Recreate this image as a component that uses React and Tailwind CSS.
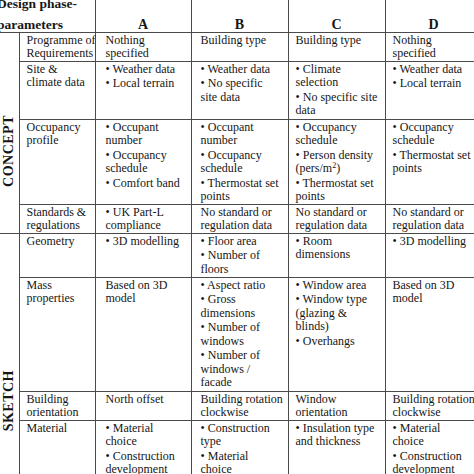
import React from "react";

const B = "• ";

const rowsConcept = [
  {
    h: "h-[28px]",
    p: ["Programme of", "Requirements"],
    c: [["Nothing", "specified"], ["Building type"], ["Building type"], ["Nothing", "specified"]],
  },
  {
    h: "h-[58px]",
    p: ["Site &", "climate data"],
    c: [
      [B + "Weather data", B + "Local terrain"],
      [B + "Weather data", B + "No specific", "site data"],
      [B + "Climate", "selection", B + "No specific site", "data"],
      [B + "Weather data", B + "Local terrain"],
    ],
  },
  {
    h: "h-[85px]",
    p: ["Occupancy", "profile"],
    c: [
      [B + "Occupant", "number", B + "Occupancy", "schedule", B + "Comfort band"],
      [B + "Occupant", "number", B + "Occupancy", "schedule", B + "Thermostat set", "points"],
      [B + "Occupancy", "schedule", B + "Person density", "PERS", B + "Thermostat set", "points"],
      [B + "Occupancy", "schedule", B + "Thermostat set", "points"],
    ],
  },
  {
    h: "h-[29px]",
    p: ["Standards &", "regulations"],
    c: [
      [B + "UK Part-L", "compliance"],
      ["No standard or", "regulation data"],
      ["No standard or", "regulation data"],
      ["No standard or", "regulation data"],
    ],
  },
];

const rowsSketch = [
  {
    h: "h-[44px]",
    p: ["Geometry"],
    c: [
      [B + "3D modelling"],
      [B + "Floor area", B + "Number of", "floors"],
      [B + "Room", "dimensions"],
      [B + "3D modelling"],
    ],
  },
  {
    h: "h-[114px]",
    p: ["Mass", "properties"],
    c: [
      ["Based on 3D", "model"],
      [B + "Aspect ratio", B + "Gross", "dimensions", B + "Number of", "windows", B + "Number of", "windows /", "facade"],
      [B + "Window area", B + "Window type", "(glazing &", "blinds)", B + "Overhangs"],
      ["Based on 3D", "model"],
    ],
  },
  {
    h: "h-[29px]",
    p: ["Building", "orientation"],
    c: [
      ["North offset"],
      ["Building rotation", "clockwise"],
      ["Window", "orientation"],
      ["Building rotation", "clockwise"],
    ],
  },
  {
    h: "h-[90px]",
    p: ["Material"],
    c: [
      [B + "Material", "choice", B + "Construction", "development"],
      [B + "Construction", "type", B + "Material", "choice", B + "Construction", "development"],
      [B + "Insulation type", "and thickness"],
      [B + "Material", "choice", B + "Construction", "development"],
    ],
  },
];

const pads = ["pl-[10px]", "pl-[9px]", "pl-[7px]", "pl-[7px]"];

function Lines({ lines }) {
  return (
    <div className="flex flex-col">
      {lines.map((l, i) => {
        const gap = i > 0 && l.startsWith(B) ? "mt-[1px]" : "";
        return l === "PERS" ? (
          <div key={i} className="whitespace-nowrap h-[13.5px]">
            (pers/m<sup className="text-[8px] leading-none">2</sup>)
          </div>
        ) : (
          <div key={i} className={`whitespace-nowrap ${gap}`}>
            {l}
          </div>
        );
      })}
    </div>
  );
}

function Row({ r, label }) {
  return (
    <tr className={r.h}>
      {label}
      <td className="border border-[#4a4a4a] align-top pl-[7px] pt-[1px] pr-0 pb-0">
        <Lines lines={r.p} />
      </td>
      {r.c.map((c, i) => (
        <td key={i} className={`border border-[#4a4a4a] align-top pt-[1px] pr-0 pb-0 ${pads[i]}`}>
          <Lines lines={c} />
        </td>
      ))}
    </tr>
  );
}

function VLabel({ text, pt }) {
  return (
    <div className={`flex justify-center ${pt}`}>
      <span className="[writing-mode:vertical-rl] rotate-180 font-bold text-[14px] leading-[14px] tracking-[0.5px]">
        {text}
      </span>
    </div>
  );
}

export default function App() {
  return (
    <div
      className="w-[474px] h-[474px] overflow-hidden bg-white text-[#161616]"
      style={{ fontFamily: '"Liberation Serif", "Times New Roman", serif' }}
    >
      <table className="table-fixed border-collapse mt-[-7px] w-[482px] text-[12px] leading-[13.5px]">
        <colgroup>
          <col className="w-[19px]" />
          <col className="w-[76px]" />
          <col className="w-[96px]" />
          <col className="w-[97px]" />
          <col className="w-[97px]" />
          <col className="w-[97px]" />
        </colgroup>
        <tbody>
          <tr className="h-[39px]">
            <td colSpan={2} className="border-b border-r border-[#4a4a4a] align-top p-0">
              <div className="h-[38px] ml-[-3px] text-[13.5px] leading-[21px] font-bold whitespace-nowrap">
                <div>Design phase-</div>
                <div>parameters</div>
              </div>
            </td>
            {["A", "B", "C", "D"].map((h) => (
              <td
                key={h}
                className="border-b border-r border-[#4a4a4a] align-bottom text-center p-0 text-[14px] leading-[14px] font-bold"
              >
                {h}
              </td>
            ))}
          </tr>
          {rowsConcept.map((r, i) => (
            <Row
              key={"c" + i}
              r={r}
              label={
                i === 0 ? (
                  <td rowSpan={4} className="border-r border-b border-[#4a4a4a] p-0 align-top">
                    <VLabel text="CONCEPT" pt="pt-[82px]" />
                  </td>
                ) : null
              }
            />
          ))}
          {rowsSketch.map((r, i) => (
            <Row
              key={"s" + i}
              r={r}
              label={
                i === 0 ? (
                  <td rowSpan={4} className="border-r border-b border-[#4a4a4a] p-0 align-top">
                    <VLabel text="SKETCH" pt="pt-[136px]" />
                  </td>
                ) : null
              }
            />
          ))}
        </tbody>
      </table>
    </div>
  );
}
